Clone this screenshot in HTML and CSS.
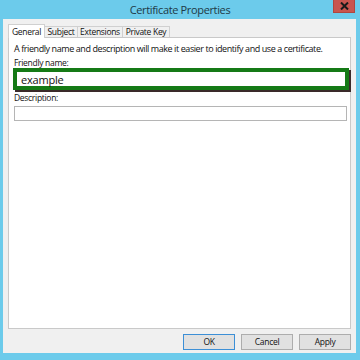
FILE: index.html
```html
<!DOCTYPE html>
<html>
<head>
<meta charset="utf-8">
<link rel="stylesheet" href="styles.css">
</head>
<body>
<div class="titlebar">
  <span class="title">Certificate Properties</span>
  <span class="close"><svg width="9" height="8" viewBox="0 0 9 8"><path d="M1 0.5 L8 7.5 M8 0.5 L1 7.5" stroke="#1a1a1a" stroke-width="2"/></svg></span>
</div>
<div class="client">
  <div class="tabs">
    <div class="tab active t1">General</div>
    <div class="tab t2">Subject</div>
    <div class="tab t3">Extensions</div>
    <div class="tab t4">Private Key</div>
  </div>
  <div class="panel">
    <p class="intro">A friendly name and description will make it easier to identify and use a certificate.</p>
    <label class="lbl lbl-name">Friendly name:</label>
    <div class="namebox"><span>example</span></div>
    <label class="lbl lbl-desc">Description:</label>
    <div class="descbox"></div>
  </div>
  <div class="buttons">
    <div class="btn default">OK</div>
    <div class="btn">Cancel</div>
    <div class="btn">Apply</div>
  </div>
</div>
</body>
</html>
```
FILE: styles.css
```css
html, body { margin: 0; padding: 0; }
body {
  width: 360px; height: 360px; overflow: hidden;
  background: #6ccbeb;
  font-family: "Open Sans", "Noto Sans", sans-serif;
  font-size: 9px; color: #111;
}
.titlebar {
  position: relative;
  height: 19px;
  display: flex; justify-content: center; align-items: center;
}
.title { font-size: 11px; letter-spacing: -0.35px; color: #1e3a46; line-height: 19px; }
.close {
  position: absolute; right: 5px; top: 0;
  width: 22px; height: 13px; background: #c9554f;
  display: flex; align-items: center; justify-content: center;
  box-sizing: border-box; border: 1px solid #b0463f; border-top: none;
}
.client {
  margin: 0 4px 0 3px; height: 334px; box-sizing: border-box;
  background: #f0f0f0; padding: 5px 5px 0 5px;
  display: flex; flex-direction: column;
}
.tabs { display: flex; height: 13px; align-items: flex-end; position: relative; z-index: 2; }
.tab {
  height: 10px; line-height: 10px; font-size: 8.5px; letter-spacing: -0.3px; text-align: center;
  border: 1px solid #d0d0d0; border-bottom: none; background: #f0f0f0;
  margin-right: -1px; white-space: nowrap;
}
.t1 { width: 35px; }
.t2 { width: 32px; }
.t3 { width: 44px; }
.t4 { width: 46px; }
.tab.active { height: 13px; line-height: 13px; background: #fff; margin-bottom: -1px; }
.panel {
  background: #fff; border: 1px solid #c9c9c9; height: 292px; box-sizing: border-box;
  padding: 5px 4px 0 5px; display: flex; flex-direction: column;
}
.intro { margin: 0; font-size: 9px; letter-spacing: -0.42px; line-height: 12px; white-space: nowrap; }
.lbl { font-size: 8.5px; letter-spacing: -0.3px; line-height: 11px; }
.lbl-name { margin-top: 2px; }
.namebox {
  margin: 0 0 0 -1px; width: 336px; height: 22px; box-sizing: border-box;
  border: 4px solid #157a16; background: #fff;
  box-shadow: 2px 2px 0 #3a2a2a;
  display: flex; align-items: center; padding-left: 4px;
  font-size: 11px; letter-spacing: -0.2px;
}
.lbl-desc { margin-top: 2px; }
.descbox { margin-top: 3px; width: 333px; height: 15px; box-sizing: border-box; border: 1px solid #b5b5b5; background: #fff; }
.buttons { display: flex; justify-content: flex-end; gap: 6px; margin-top: 5px; }
.btn {
  width: 52px; height: 16px; box-sizing: border-box; border: 1px solid #adadad;
  background: #e1e1e1; font-size: 8.5px; letter-spacing: -0.3px; line-height: 14px; text-align: center;
}
.btn.default { border-color: #3c8fd6; }
```
